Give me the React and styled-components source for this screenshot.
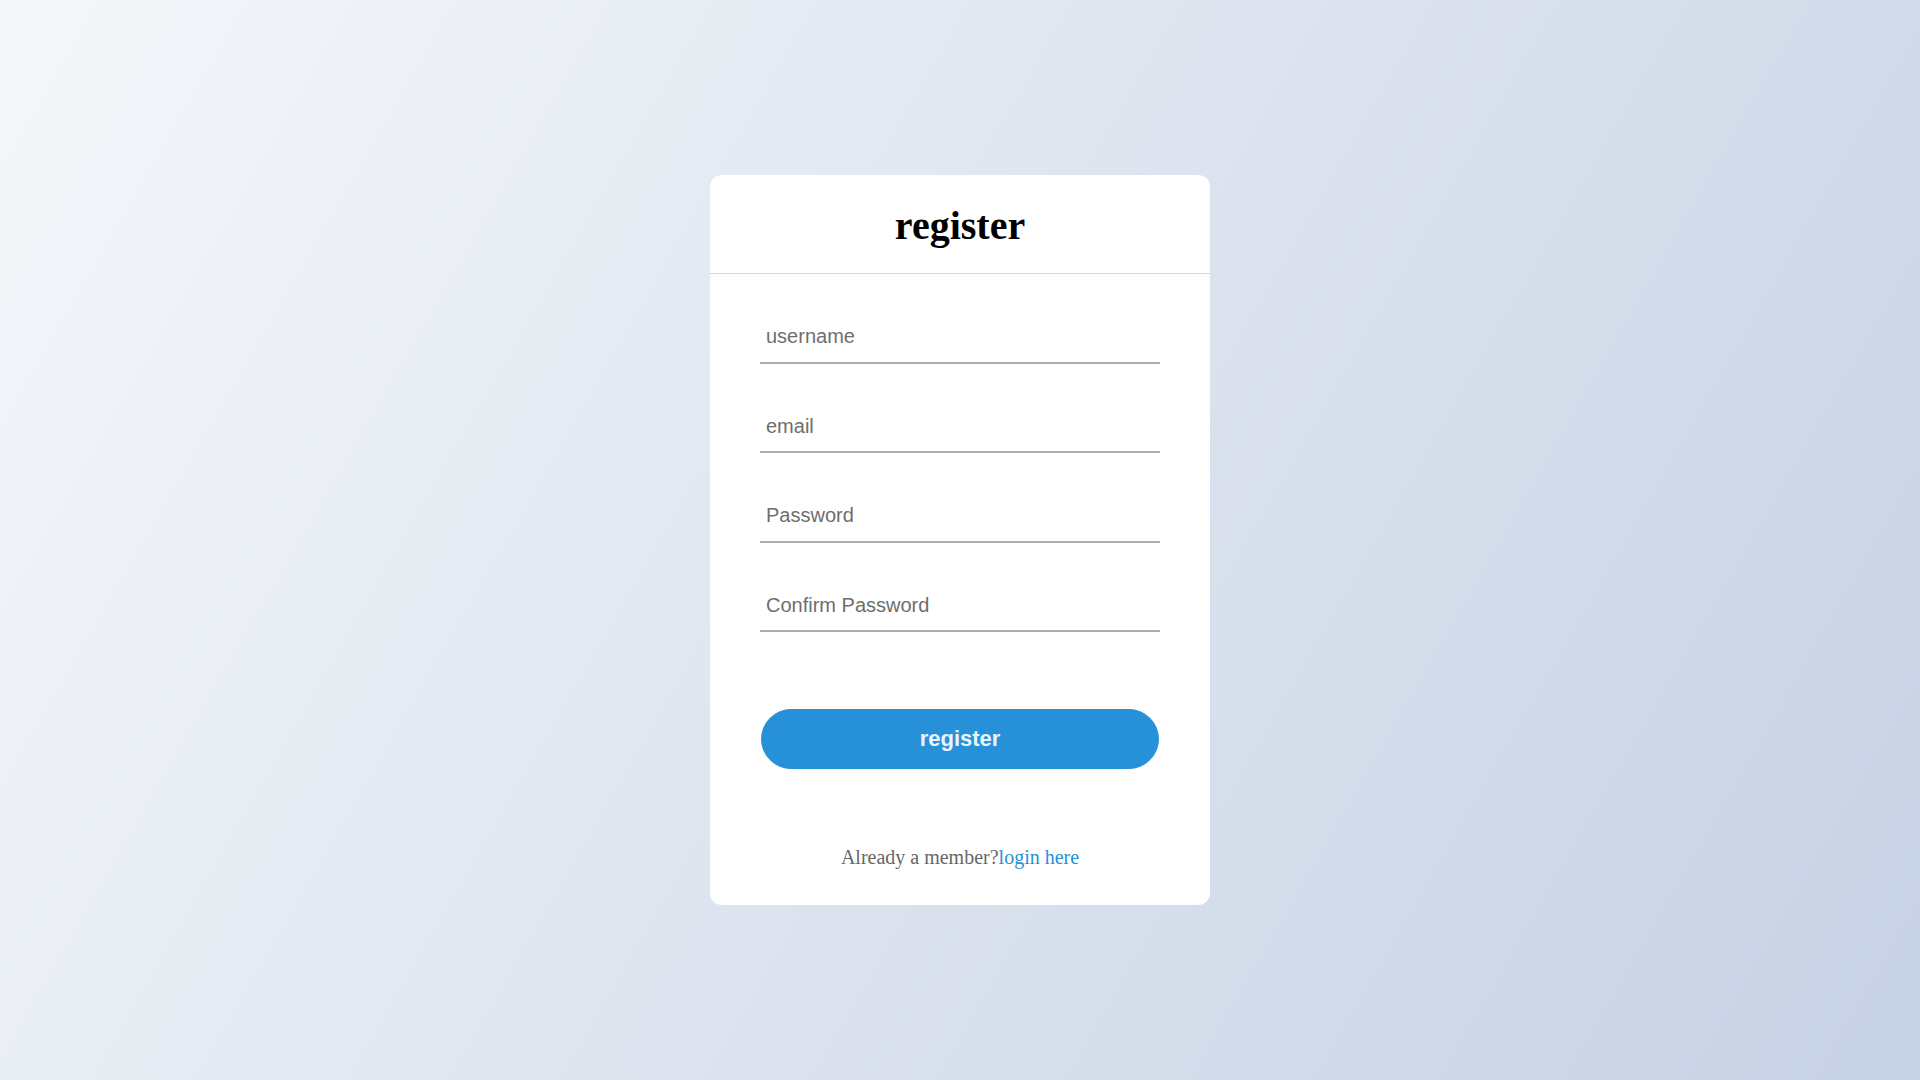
import styled, { createGlobalStyle } from "styled-components";

const GlobalStyle = createGlobalStyle`
  * {
    box-sizing: border-box;
  }
  html, body, #root {
    margin: 0;
    padding: 0;
    height: 100%;
  }
  body {
    background: linear-gradient(120deg, #f5f7fa 0%, #c6d1e4 100%);
    font-family: "Liberation Serif", "Times New Roman", serif;
  }
`;

const Page = styled.div`
  height: 100vh;
  display: flex;
  align-items: center;
  justify-content: center;
`;

const Card = styled.div`
  width: 500px;
  background: #fff;
  border-radius: 12px;
`;

const Title = styled.h1`
  margin: 0;
  padding: 28px 0 24px;
  text-align: center;
  font-family: "Liberation Serif", "Times New Roman", serif;
  font-size: 40px;
  font-weight: bold;
  line-height: 46px;
  color: #000;
  border-bottom: 1px solid #d6d6d6;
`;

const Form = styled.form`
  padding: 0 50px;
  display: flex;
  flex-direction: column;
`;

const Field = styled.div`
  margin-top: 37.5px;
  border-bottom: 2px solid #adadad;
`;

const Input = styled.input`
  display: block;
  width: 100%;
  height: 50px;
  padding: 0 6px;
  border: none;
  outline: none;
  background: none;
  font-family: "Liberation Sans", Arial, sans-serif;
  font-size: 20px;
  color: #333;

  &::placeholder {
    color: #6e6e6e;
  }
`;

const Submit = styled.button`
  margin: 77px 1px 0;
  height: 60px;
  border: 1px solid #2691d9;
  border-radius: 30px;
  background: #2691d9;
  color: #e9f4fb;
  font-family: "Liberation Sans", Arial, sans-serif;
  font-size: 22px;
  font-weight: bold;
  cursor: pointer;
`;

const SignupLink = styled.div`
  margin: 77px 0 36px;
  text-align: center;
  font-size: 20px;
  line-height: 23px;
  color: #666;

  a {
    color: #2691d9;
    text-decoration: none;
  }
`;

const fields = [
  { type: "text", placeholder: "username" },
  { type: "text", placeholder: "email" },
  { type: "password", placeholder: "Password" },
  { type: "password", placeholder: "Confirm Password" },
];

const App = () => {
  return (
    <>
      <GlobalStyle />
      <Page>
        <Card>
          <Title>register</Title>
          <Form onSubmit={(e) => e.preventDefault()}>
            {fields.map((f) => (
              <Field key={f.placeholder}>
                <Input type={f.type} placeholder={f.placeholder} />
              </Field>
            ))}
            <Submit type="submit">register</Submit>
            <SignupLink>
              Already a member?<a href="#">login here</a>
            </SignupLink>
          </Form>
        </Card>
      </Page>
    </>
  );
};

export default App;
